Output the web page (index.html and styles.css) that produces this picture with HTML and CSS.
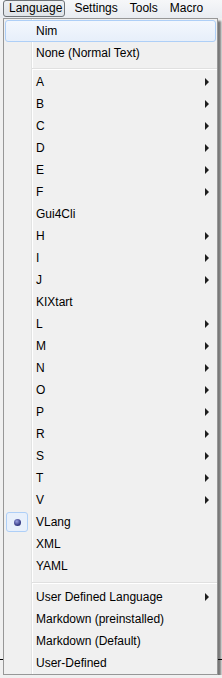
FILE: index.html
```html
<!DOCTYPE html>
<html lang="en">
<head>
    <meta charset="UTF-8">
    <title>Language menu</title>
    <link rel="stylesheet" href="styles.css">
</head>
<body>
    <!-- Menu bar -->
    <div class="menubar">
        <span class="menubar-item open">Language</span>
        <span class="menubar-item">Settings</span>
        <span class="menubar-item">Tools</span>
        <span class="menubar-item">Macro</span>
    </div>

    <!-- Language dropdown -->
    <div class="dropdown">
        <div class="item hot">Nim</div>
        <div class="item">None (Normal Text)</div>
        <div class="sep"></div>
        <div class="item sub">A</div>
        <div class="item sub">B</div>
        <div class="item sub">C</div>
        <div class="item sub">D</div>
        <div class="item sub">E</div>
        <div class="item sub">F</div>
        <div class="item">Gui4Cli</div>
        <div class="item sub">H</div>
        <div class="item sub">I</div>
        <div class="item sub">J</div>
        <div class="item">KIXtart</div>
        <div class="item sub">L</div>
        <div class="item sub">M</div>
        <div class="item sub">N</div>
        <div class="item sub">O</div>
        <div class="item sub">P</div>
        <div class="item sub">R</div>
        <div class="item sub">S</div>
        <div class="item sub">T</div>
        <div class="item sub">V</div>
        <div class="item checked"><span class="radio"><span class="dot"></span></span>VLang</div>
        <div class="item">XML</div>
        <div class="item">YAML</div>
        <div class="sep wide"></div>
        <div class="item sub">User Defined Language</div>
        <div class="item">Markdown (preinstalled)</div>
        <div class="item">Markdown (Default)</div>
        <div class="item">User-Defined</div>
    </div>
</body>
</html>
```

FILE: styles.css
```css
body {
    margin: 0;
    padding: 0;
    font-family: "Liberation Sans", Arial, sans-serif;
    font-size: 12px;
    color: #000;
    background-color: #f0f0f0;
    /* edge of the window behind the menu */
    background-image: linear-gradient(transparent 659px, #000 659px, #000 660px, transparent 660px);
}

/* Menu bar */
.menubar {
    height: 18px;
    display: flex;
    align-items: flex-start;
    gap: 3px;
    padding-left: 3px;
    background: linear-gradient(#f6f7f9, #e9ecf1);
}

.menubar-item {
    height: 17px;
    line-height: 15px;
    padding: 0 2px 0 5px;
    border: 1px solid transparent;
    border-radius: 3px;
    box-sizing: border-box;
}

.menubar-item.open {
    border-color: #6f7378;
    background: linear-gradient(#eef0f3, #dfe3e8);
}

/* Dropdown */
.dropdown {
    width: 215px;
    margin-left: 3px;
    padding: 1px 0 0;
    box-sizing: border-box;
    border: 1px solid #979797;
    background-color: #f0f0f0;
    background-image: linear-gradient(to right,
        transparent 27px, #e2e3e3 27px, #e2e3e3 28px,
        #ffffff 28px, #ffffff 29px, transparent 29px);
    box-shadow: 3px 3px 2px rgba(0, 0, 0, 0.5);
}

.item {
    position: relative;
    display: flex;
    align-items: center;
    height: 22px;
    margin: 0 1px;
    padding: 0 6px 0 30px;
    box-sizing: border-box;
    border: 1px solid transparent;
    border-radius: 3px;
    white-space: nowrap;
}

.item.hot {
    border-color: #aecff7;
    background: linear-gradient(#f3f7fd, #e7effa);
}

.item.sub::after {
    content: "";
    margin-left: auto;
    border-left: 4px solid #1e1e1e;
    border-top: 4px solid transparent;
    border-bottom: 4px solid transparent;
}

.sep {
    height: 7px;
    margin-left: 28px;
    background: linear-gradient(transparent 4px, #e0e0e0 4px, #e0e0e0 5px,
        #ffffff 5px, #ffffff 6px, transparent 6px);
}

.sep.wide {
    height: 9px;
    background: linear-gradient(transparent 5px, #e0e0e0 5px, #e0e0e0 6px,
        #ffffff 6px, #ffffff 7px, transparent 7px);
}

/* Radio mark for the current language */
.radio {
    position: absolute;
    left: 0;
    top: 0;
    width: 22px;
    height: 20px;
    box-sizing: border-box;
    border: 1px solid #aecff7;
    border-radius: 3px;
    background: #e8f0fb;
    display: flex;
    align-items: center;
    justify-content: center;
}

.dot {
    width: 7px;
    height: 7px;
    border-radius: 50%;
    background: radial-gradient(circle at 40% 35%, #9aa0e0, #3a3f8a 60%, #1f2360);
}
```
